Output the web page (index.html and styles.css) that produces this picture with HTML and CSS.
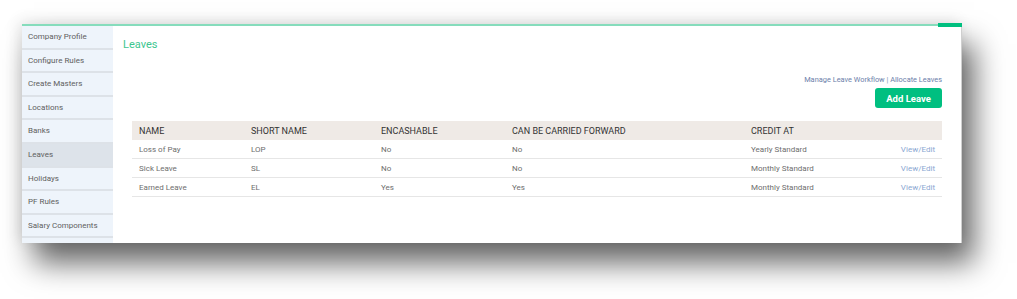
FILE: index.html
```html
<!DOCTYPE html>
<html lang="en">
<head>
    <meta charset="UTF-8">
    <meta name="viewport" content="width=device-width, initial-scale=1.0">
    <title>Leaves</title>
    <link rel="stylesheet" href="styles.css">
</head>
<body>
    <div class="window">
        <div class="sidebar">
            <div class="nav-item">Company Profile</div>
            <div class="nav-item">Configure Rules</div>
            <div class="nav-item">Create Masters</div>
            <div class="nav-item">Locations</div>
            <div class="nav-item">Banks</div>
            <div class="nav-item active">Leaves</div>
            <div class="nav-item">Holidays</div>
            <div class="nav-item">PF Rules</div>
            <div class="nav-item">Salary Components</div>
        </div>
        <div class="main">
            <div class="page-title">Leaves</div>
            <div class="links">
                <a href="#">Manage Leave Workflow</a> | <a href="#">Allocate Leaves</a>
            </div>
            <div class="actions">
                <button class="btn-add">Add Leave</button>
            </div>
            <table class="leave-table">
                <thead>
                    <tr>
                        <th class="col-name">NAME</th>
                        <th class="col-short">SHORT NAME</th>
                        <th class="col-enc">ENCASHABLE</th>
                        <th class="col-carry">CAN BE CARRIED FORWARD</th>
                        <th class="col-credit">CREDIT AT</th>
                        <th></th>
                    </tr>
                </thead>
                <tbody>
                    <tr>
                        <td>Loss of Pay</td>
                        <td>LOP</td>
                        <td>No</td>
                        <td>No</td>
                        <td>Yearly Standard</td>
                        <td class="edit"><a href="#">View/Edit</a></td>
                    </tr>
                    <tr>
                        <td>Sick Leave</td>
                        <td>SL</td>
                        <td>No</td>
                        <td>No</td>
                        <td>Monthly Standard</td>
                        <td class="edit"><a href="#">View/Edit</a></td>
                    </tr>
                    <tr>
                        <td>Earned Leave</td>
                        <td>EL</td>
                        <td>Yes</td>
                        <td>Yes</td>
                        <td>Monthly Standard</td>
                        <td class="edit"><a href="#">View/Edit</a></td>
                    </tr>
                </tbody>
            </table>
        </div>
    </div>
</body>
</html>
```

FILE: styles.css
```css
html, body {
    height: 100%;
}
body {
    margin: 0;
    padding: 24px 0 0 22px;
    box-sizing: border-box;
    background: #fff;
    font-family: Roboto, "Liberation Sans", sans-serif;
}
.window {
    width: 939px;
    height: 217px;
    display: flex;
    position: relative;
    background: #fff;
    border-top: 2px solid #86dcbc;
    border-right: 1px solid #cfcfcf;
    box-shadow: 12px 20px 28px rgba(0, 0, 0, 0.6), -3px -3px 14px rgba(0, 0, 0, 0.1);
}
.window::after {
    content: "";
    position: absolute;
    top: -3px;
    right: -1px;
    width: 24px;
    height: 4px;
    background: #00bf7f;
}
.sidebar {
    width: 92px;
    background: #eef4fb;
    overflow: hidden;
}
.nav-item {
    height: 21.6px;
    line-height: 22px;
    padding-left: 6px;
    font-size: 8px;
    color: #606060;
    border-bottom: 2px solid #dde2e8;
}
.nav-item.active {
    background: #dde3ea;
}
.main {
    flex: 1;
    padding: 0 19px 0 10px;
}
.page-title {
    margin-top: 12px;
    font-size: 11px;
    color: #3dc68f;
}
.links {
    margin-top: 24px;
    text-align: right;
    font-size: 7.4px;
    color: #7a8db0;
}
.links a {
    color: #6c80aa;
    text-decoration: none;
}
.actions {
    display: flex;
    justify-content: flex-end;
    margin-top: 4px;
}
.btn-add {
    width: 67px;
    height: 20px;
    border: none;
    border-radius: 3px;
    background: #00bf80;
    color: #fff;
    font-family: Roboto, "Liberation Sans", sans-serif;
    font-size: 9.5px;
    font-weight: bold;
    padding: 0;
}
.leave-table {
    margin: 13px 0 0 9px;
    width: 810px;
    border-collapse: collapse;
    font-size: 8px;
}
.leave-table th {
    background: #efeae6;
    color: #333;
    font-weight: normal;
    font-size: 9px;
    text-align: left;
    height: 19px;
    padding: 0 7px;
}
.leave-table td {
    height: 18px;
    padding: 0 7px;
    color: #6e6e6e;
    border-bottom: 1px solid #e6e6e6;
}
.col-name { width: 98px; }
.col-short { width: 116px; }
.col-enc { width: 117px; }
.col-carry { width: 225px; }
.leave-table td.edit {
    text-align: right;
}
.edit a {
    color: #8aa7d2;
    text-decoration: none;
}
```
